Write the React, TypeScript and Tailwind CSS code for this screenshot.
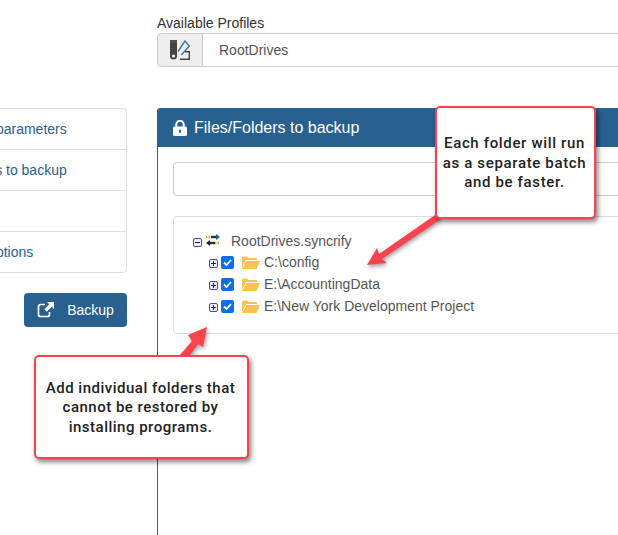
const navItems = ["Set backup parameters", "Files/Folders to backup", "Schedule", "Advanced options"];

const folders = ["C:\\config", "E:\\AccountingData", "E:\\New York Development Project"];

function Swatch() {
  return (
    <svg width="20" height="20" viewBox="0 0 20 20">
      <path d="M0 0h7v16a3.500 3.500 0 0 1-7 0z" fill="#444" />
      <path d="M0 0h7v3H0z" fill="#5a4a40" />
      <circle cx="3.500" cy="16" r="1.500" fill="#fff" />
      <path d="M8 11.500L15 1l4.300 5-8 9" fill="none" stroke="#3a78ac" strokeWidth="1.400" />
      <path d="M10 19.300h9.300v-7.600H15" fill="none" stroke="#444" strokeWidth="1.400" />
    </svg>
  );
}

function SyncIcon() {
  return (
    <svg width="14" height="12" viewBox="0 0 14 12">
      <path d="M0 3h5" stroke="#e8a33a" strokeWidth="2.400" strokeDasharray="1.500 1" />
      <path d="M5 3h6" stroke="#33302c" strokeWidth="2.400" />
      <path d="M10 0l4 3-4 3z" fill="#1f5f9f" />
      <path d="M9 9h5" stroke="#e8a33a" strokeWidth="2.400" strokeDasharray="1.500 1" />
      <path d="M3 9h6" stroke="#33302c" strokeWidth="2.400" />
      <path d="M4 6L0 9l4 3z" fill="#222" />
    </svg>
  );
}

function LockIcon() {
  return (
    <svg width="14" height="16" viewBox="0 0 14 16">
      <path d="M3.300 7V4.500a3.700 3.700 0 0 1 7.400 0V7" fill="none" stroke="#fff" strokeWidth="2" />
      <rect x="0" y="6.500" width="14" height="9.500" rx="1.500" fill="#fff" />
      <rect x="6" y="9.500" width="2" height="3.500" rx="1" fill="#286090" />
    </svg>
  );
}

function FolderIcon() {
  return (
    <svg width="18" height="13" viewBox="0 0 18 13" className="shrink-0">
      <path d="M0 12V1.500A1 1 0 0 1 1 .5h4l1.500 1.500H14a1 1 0 0 1 1 1V4H4L0 12z" fill="#fcc44f" />
      <path d="M4.500 5H18l-3.500 8H0z" fill="#fcc44f" />
    </svg>
  );
}

function TreeToggle({ open }: { open?: boolean }) {
  return (
    <span className="flex h-[9px] w-[9px] shrink-0 items-center justify-center rounded-[2px] border border-[#4a4a9a] bg-[#eef]">
      <svg width="7" height="7" viewBox="0 0 7 7">
        <path d="M1 3.500h5" stroke="#1a1a9a" strokeWidth="1" />
        {!open && <path d="M3.500 1v5" stroke="#1a1a9a" strokeWidth="1" />}
      </svg>
    </span>
  );
}

function Check() {
  return (
    <span className="flex h-[13px] w-[13px] shrink-0 items-center justify-center rounded-[2px] bg-[#0b6fe8]">
      <svg width="11" height="11" viewBox="0 0 11 11">
        <path d="M2 5.500l2.500 2.500L9 3" fill="none" stroke="#fff" strokeWidth="1.800" />
      </svg>
    </span>
  );
}

function Callout({ className, lines }: { className: string; lines: string[] }) {
  return (
    <div
      className={`absolute flex flex-col items-center justify-center rounded-[5px] border-2 border-[#f9444e] bg-white pt-[2px] text-center font-medium text-[#222] shadow-[2px_3px_5px_rgba(0,0,0,0.5)] ${className}`}
      style={{ fontFamily: "Roboto, sans-serif" }}
    >
      {lines.map(l => (
        <div key={l} className="text-[15px] leading-[19.5px]">{l}</div>
      ))}
    </div>
  );
}

export default function App() {
  return (
    <div
      className="relative flex h-[535px] w-[618px] overflow-hidden bg-white text-[14px] text-[#555]"
      style={{ fontFamily: '"Liberation Sans", Arial, sans-serif' }}
    >
      {/* Sidebar, runs off the left edge */}
      <div className="ml-[-94px] mr-[30px] w-[221px] shrink-0 pt-[108px]">
        <div className="rounded-[4px] border border-[#ddd]">
          {navItems.map((item, i) => (
            <div
              key={item}
              className={`whitespace-nowrap px-[15px] leading-[20px] text-[#2a6090] ${i ? "h-[41px] border-t border-[#ddd] pt-[10px]" : "h-[40px] pt-[10px]"}`}
            >
              {item}
            </div>
          ))}
        </div>
        <div className="mt-[20px] flex justify-end">
          <button className="flex h-[34px] w-[103px] items-center justify-center gap-[13px] rounded-[4px] bg-[#286090] text-white">
            <svg width="17" height="16" viewBox="0 0 17 16">
              <path d="M8 2.500H3.500a2 2 0 0 0-2 2v8a2 2 0 0 0 2 2h7a2 2 0 0 0 2-2V10" fill="none" stroke="#fff" strokeWidth="1.700" />
              <path d="M10 0h7v7l-2.300-2.300-5 5-2.400-2.400 5-5z" fill="#fff" />
            </svg>
            Backup
          </button>
        </div>
      </div>

      {/* Main column */}
      <div className="w-[600px] shrink-0 pt-[13px]">
        <div className="h-[20px] leading-[20px] text-[#333]">Available Profiles</div>
        <div className="flex h-[34px]">
          <div className="flex w-[46px] items-center justify-center rounded-l-[4px] border border-[#ccc] bg-[#eee]">
            <Swatch />
          </div>
          <div className="flex flex-1 items-center border border-l-0 border-[#ccc] pl-[16px]">RootDrives</div>
        </div>

        <div className="mt-[41px] h-[500px] rounded-t-[4px] border-l border-[#286090]">
          <div className="-ml-px flex h-[39px] items-center gap-[7px] rounded-t-[4px] bg-[#286090] pl-[16px] text-[16px] text-white">
            <LockIcon />
            Files/Folders to backup
          </div>
          <div className="px-[15px] pt-[15px]">
            <div className="h-[34px] rounded-[4px] border border-[#ccc]" />
            <div className="mt-[20px] h-[118px] rounded-[4px] border border-[#ddd] pl-[19px] pt-[15px]">
              <div className="flex h-[19px] items-center">
                <span className="mt-[2px]"><TreeToggle open /></span>
                <span className="ml-[4px] -mt-[3px]"><SyncIcon /></span>
                <span className="ml-[11px]">RootDrives.syncrify</span>
              </div>
              {folders.map(f => (
                <div key={f} className="ml-[16px] flex h-[22px] items-center">
                  <span className="mt-[3px]"><TreeToggle /></span>
                  <span className="ml-[3px] mt-[1px]"><Check /></span>
                  <span className="ml-[8px]"><FolderIcon /></span>
                  <span className="ml-[4px]">{f}</span>
                </div>
              ))}
            </div>
          </div>
        </div>
      </div>

      {/* Annotation arrows */}
      <svg className="absolute left-0 top-0" width="618" height="535" style={{ filter: "drop-shadow(1px 2px 2px rgba(0,0,0,0.4))" }}>
        <path d="M438 213L441 219L382 259L387 263L367 265L377 248L379 254z" fill="#f9444e" />
        <path d="M180 355L192 341L188 335L207 327L203 347L198 344L188 358z" fill="#f9444e" />
      </svg>

      <Callout className="left-[435px] top-[106px] h-[113px] w-[161px] pr-[2px] tracking-[0.65px]" lines={["Each folder will run", "as a separate batch", "and be faster."]} />
      <Callout className="left-[34px] top-[355px] h-[104px] w-[215px] pr-[2px] tracking-[0.5px]" lines={["Add individual folders that", "cannot be restored by", "installing programs."]} />
    </div>
  );
}
